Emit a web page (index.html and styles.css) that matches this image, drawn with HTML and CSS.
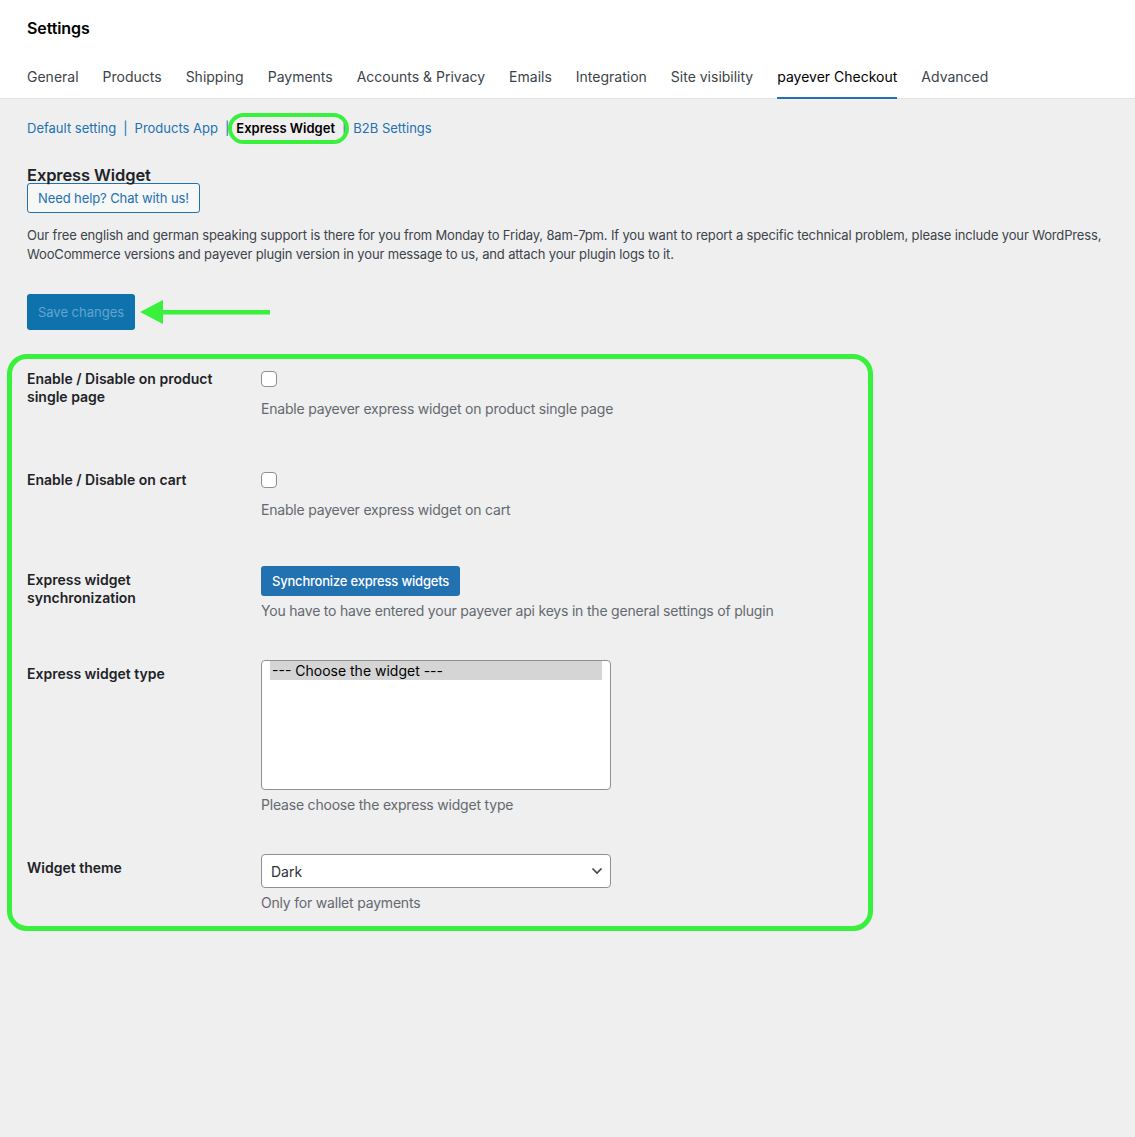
FILE: index.html
```html
<!DOCTYPE html>
<html lang="en">
<head>
  <meta charset="UTF-8">
  <meta name="viewport" content="width=device-width, initial-scale=1.0">
  <title>Settings – payever Checkout</title>
  <link rel="stylesheet" href="styles.css">
</head>
<body>
  <header class="page-head">
    <h1>Settings</h1>
    <nav class="nav-tabs">
      <a href="#" class="nav-tab">General</a>
      <a href="#" class="nav-tab">Products</a>
      <a href="#" class="nav-tab">Shipping</a>
      <a href="#" class="nav-tab">Payments</a>
      <a href="#" class="nav-tab">Accounts &amp; Privacy</a>
      <a href="#" class="nav-tab">Emails</a>
      <a href="#" class="nav-tab">Integration</a>
      <a href="#" class="nav-tab">Site visibility</a>
      <a href="#" class="nav-tab nav-tab-active">payever Checkout</a>
      <a href="#" class="nav-tab">Advanced</a>
    </nav>
  </header>

  <main class="content">
    <ul class="subsubsub">
      <li><a href="#">Default setting</a><span class="sep">|</span></li>
      <li><a href="#">Products App</a><span class="sep">|</span></li>
      <li><a href="#" class="current">Express Widget</a><span class="sep">|</span></li>
      <li><a href="#">B2B Settings</a></li>
    </ul>

    <h2 class="section-title">Express Widget</h2>
    <button class="help-btn">Need help? Chat with us!</button>
    <p class="support-note">Our free english and german speaking support is there for you from Monday to Friday, 8am-7pm. If you want to report a specific technical problem, please include your WordPress, WooCommerce versions and payever plugin version in your message to us, and attach your plugin logs to it.</p>

    <div class="save-row">
      <button class="btn-primary" disabled>Save changes</button>
      <!-- pointer to the save button -->
      <svg class="pointer-arrow" width="132" height="26" viewBox="0 0 132 26">
        <polygon points="0,13 23,1 23,25" fill="#39f03c"/>
        <rect x="22" y="11" width="108" height="4.5" fill="#39f03c"/>
      </svg>
    </div>

    <div class="highlight-box">
      <div class="form-rows">
        <div class="form-row form-row-check">
          <label class="row-label" for="wg-product">Enable / Disable on product single page</label>
          <div class="row-field">
            <input type="checkbox" id="wg-product" class="check">
            <p class="description">Enable payever express widget on product single page</p>
          </div>
        </div>

        <div class="form-row form-row-check">
          <label class="row-label" for="wg-cart">Enable / Disable on cart</label>
          <div class="row-field">
            <input type="checkbox" id="wg-cart" class="check">
            <p class="description">Enable payever express widget on cart</p>
          </div>
        </div>

        <div class="form-row">
          <div class="row-label row-label-offset">Express widget<br>synchronization</div>
          <div class="row-field">
            <button class="btn-blue">Synchronize express widgets</button>
            <p class="description">You have to have entered your payever api keys in the general settings of plugin</p>
          </div>
        </div>

        <div class="form-row">
          <label class="row-label row-label-offset" for="wg-type">Express widget type</label>
          <div class="row-field">
            <select id="wg-type" class="list-select" multiple>
              <option selected>--- Choose the widget ---</option>
            </select>
            <p class="description">Please choose the express widget type</p>
          </div>
        </div>

        <div class="form-row">
          <label class="row-label row-label-offset" for="wg-theme">Widget theme</label>
          <div class="row-field">
            <div class="select-wrap">
              <select id="wg-theme" class="drop-select">
                <option>Dark</option>
                <option>Light</option>
              </select>
              <svg class="chevron" width="12" height="8" viewBox="0 0 12 8">
                <path d="M1.5 1.5 L6 6 L10.5 1.5" fill="none" stroke="#3c434a" stroke-width="1.6"/>
              </svg>
            </div>
            <p class="description">Only for wallet payments</p>
          </div>
        </div>
      </div>
    </div>
  </main>
</body>
</html>
```

FILE: styles.css
```css
:root {
  --bg: #efefef;
  --text: #1d2327;
  --text-soft: #3c434a;
  --muted: #646970;
  --blue: #2271b1;
  --border: #8c8f94;
  --mark: #39f03c;
}

* {
  box-sizing: border-box;
}

body {
  margin: 0;
  background: var(--bg);
  color: var(--text-soft);
  font-family: Inter, "Noto Sans", sans-serif;
  font-size: 13px;
  min-height: 100vh;
}

a {
  text-decoration: none;
}

/* top bar with tabs */
.page-head {
  background: #fff;
  padding: 18px 27px 0;
  border-bottom: 1px solid #e2e2e2;
}

.page-head h1 {
  margin: 0;
  font-size: 16px;
  line-height: 20px;
  font-weight: 600;
  color: #000;
  letter-spacing: -0.1px;
}

.nav-tabs {
  display: flex;
  gap: 24px;
  margin-top: 29px;
}

.nav-tab {
  font-size: 14px;
  line-height: 20px;
  color: #3c434a;
  padding-bottom: 10px;
  border-bottom: 2px solid transparent;
  margin-bottom: -1px;
}

.nav-tab-active {
  color: #000;
  border-bottom-color: var(--blue);
}

.content {
  padding: 19px 0 40px 27px;
}

/* sub navigation */
.subsubsub {
  list-style: none;
  margin: 0;
  padding: 0;
  display: flex;
  line-height: 20px;
}

.subsubsub a {
  color: var(--blue);
}

.subsubsub .sep {
  margin: 0 7px;
  color: var(--blue);
}

.subsubsub a.current {
  position: relative;
  color: #000;
  font-weight: 600;
}

.subsubsub a.current::after {
  content: "";
  position: absolute;
  top: -7px;
  bottom: -8px;
  left: -8px;
  right: -14px;
  border: 4px solid var(--mark);
  border-radius: 18px;
}

.section-title {
  margin: 28px 0 0;
  font-size: 16.5px;
  line-height: 18px;
  font-weight: 600;
  letter-spacing: -0.1px;
  color: var(--text);
}

.help-btn {
  display: block;
  margin-top: -1px;
  font: inherit;
  letter-spacing: -0.1px;
  color: var(--blue);
  background: #f6f7f7;
  border: 1px solid var(--blue);
  border-radius: 3px;
  height: 30px;
  padding: 0 10px;
}

.support-note {
  margin: 13px 0 0;
  line-height: 19px;
  letter-spacing: -0.15px;
  color: var(--text-soft);
}

.save-row {
  display: flex;
  align-items: center;
  gap: 5px;
  margin-top: 30px;
}

.btn-primary {
  font: inherit;
  height: 36px;
  width: 108px;
  border: none;
  border-radius: 3px;
  background: #0e73ad;
  color: #64a3cd;
}

.pointer-arrow {
  flex: none;
}

/* outlined group of settings */
.highlight-box {
  width: 866px;
  margin: 24px 0 0 -20px;
  border: 5px solid var(--mark);
  border-radius: 20px;
  padding: 11px 15px 14px;
}

.form-rows {
  display: flex;
  flex-direction: column;
  gap: 40px;
}

.form-row {
  display: grid;
  grid-template-columns: 234px 1fr;
  align-items: start;
}

.form-row-check {
  padding-bottom: 7px;
}

.form-row-check:first-child {
  padding-bottom: 13px;
}

.row-label {
  font-size: 14px;
  line-height: 18px;
  font-weight: 600;
  color: var(--text);
  max-width: 205px;
}

.row-label-offset {
  margin-top: 5px;
}

.row-field {
  display: flex;
  flex-direction: column;
  align-items: flex-start;
}

.description {
  margin: 6px 0 0;
  font-size: 14px;
  line-height: 18px;
  color: var(--muted);
  letter-spacing: -0.2px;
}

.check {
  appearance: none;
  width: 16px;
  height: 16px;
  margin: 1px 0 0;
  background: #fff;
  border: 1px solid var(--border);
  border-radius: 4px;
}

.check + .description {
  margin-top: 13px;
}

.btn-blue {
  font: inherit;
  font-weight: 500;
  letter-spacing: -0.2px;
  height: 30px;
  padding: 0 11px;
  border: none;
  border-radius: 3px;
  background: var(--blue);
  color: #fff;
}

.list-select {
  width: 350px;
  height: 130px;
  margin: 0;
  padding: 0 8px;
  background: #fff;
  border: 1px solid var(--border);
  border-radius: 4px;
  font: inherit;
  font-size: 14px;
  color: #000;
  outline: none;
}

.list-select option {
  padding: 1px 2px;
  line-height: 18px;
}

.list-select option:checked {
  background: #d5d5d5;
  color: #000;
}

.select-wrap {
  position: relative;
  width: 350px;
}

.drop-select {
  appearance: none;
  width: 100%;
  height: 34px;
  margin: 0;
  padding: 0 24px 0 9px;
  background: #fff;
  border: 1px solid var(--border);
  border-radius: 4px;
  font: inherit;
  font-size: 14px;
  color: #2c3338;
}

.chevron {
  position: absolute;
  right: 8px;
  top: 13px;
  pointer-events: none;
}
```
